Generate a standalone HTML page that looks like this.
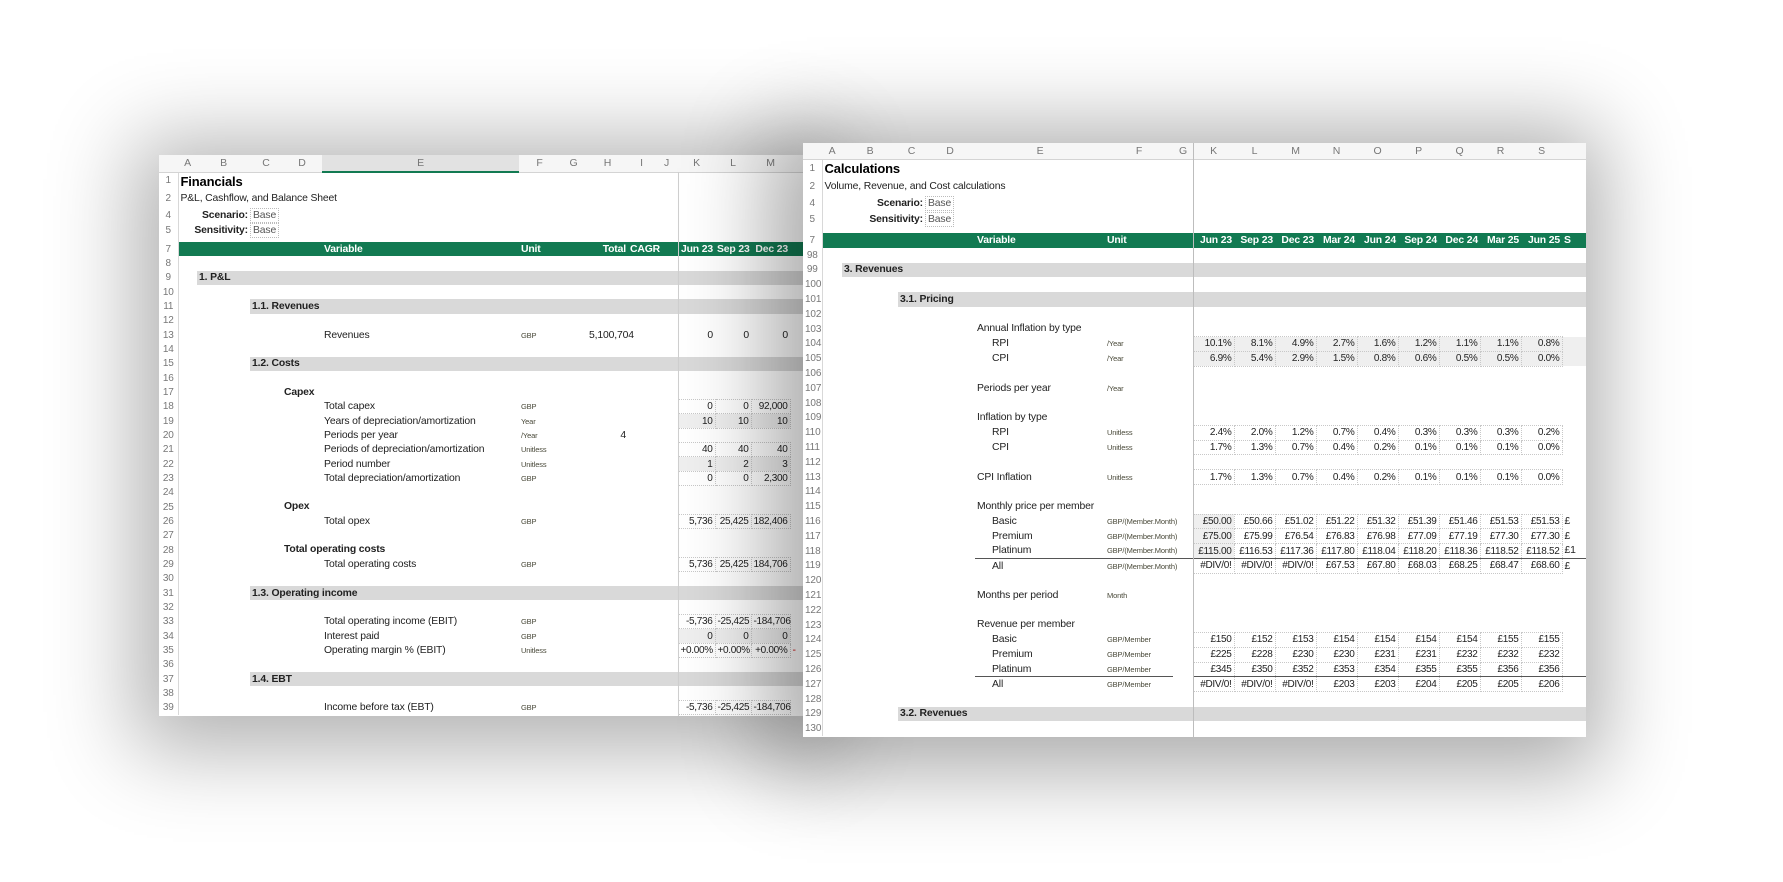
<!DOCTYPE html>
<html><head><meta charset="utf-8"><style>
*{margin:0;padding:0;box-sizing:border-box}
body{width:1783px;height:882px;background:#fff;position:relative;overflow:hidden;font-family:"Liberation Sans",sans-serif;font-size:10.4px;color:#222;letter-spacing:-0.15px}
.sheet{position:absolute;background:#fff;overflow:hidden}
table{border-collapse:collapse;table-layout:fixed;position:absolute;left:0}
td,th{white-space:nowrap;overflow:visible;padding:0 2px;font-weight:normal;vertical-align:middle}
th{color:#777;text-align:center;border-right:1px solid #d8d8d8;font-size:10px}
.ch td{color:#777;text-align:center;background:#f6f6f6;border-bottom:1px solid #d4d4d4;font-size:10.5px}
.g td{background:#127a52;color:#fff;font-weight:bold}
.bar{background:#d9d9d9;font-weight:bold}
.v{text-align:right;border:1px dotted #c8c8c8;font-size:10px;letter-spacing:-0.3px}
.in{background:#efefef}
.u{font-size:7.5px;color:#4a4a3a}
.b{font-weight:bold}
.r{text-align:right}
.box{border:1px dotted #bbb;color:#555;display:inline-block;padding:0 2px;line-height:13px}
.ln{border-bottom:1px solid #555}
.div{position:absolute;top:0;bottom:0;width:1px;background:#cfcfcf}
</style></head><body>

<div class="sheet" style="left:159px;top:155px;width:646px;height:561px;box-shadow:0 10px 80px 25px rgba(0,0,0,0.3)">
<table style="top:0;width:646px">
<colgroup><col style="width:19px"><col style="width:19px"><col style="width:53px"><col style="width:32px"><col style="width:40px"><col style="width:197px"><col style="width:41px"><col style="width:27px"><col style="width:41px"><col style="width:27px"><col style="width:23px"><col style="width:37px"><col style="width:36px"><col style="width:39px"><col style="width:15px"></colgroup>
<tr class="ch" style="height:17px"><td></td><td>A</td><td>B</td><td>C</td><td>D</td><td style="background:#e2e2e2;border-bottom:2px solid #127a52">E</td><td>F</td><td>G</td><td>H</td><td>I</td><td>J</td><td>K</td><td>L</td><td>M</td><td></td></tr>
<tr style="height:17px"><th>1</th><td colspan="14" class="b" style="font-size:13px;color:#000">Financials</td></tr>
<tr style="height:18px"><th>2</th><td colspan="14">P&amp;L, Cashflow, and Balance Sheet</td></tr>
<tr style="height:16px"><th>4</th><td colspan="2" class="b r">Scenario:</td><td colspan="12" style="padding:0"><span class="box">Base</span></td></tr>
<tr style="height:15px"><th>5</th><td colspan="2" class="b r">Sensitivity:</td><td colspan="12" style="padding:0"><span class="box">Base</span></td></tr>
<tr style="height:4px"><th></th><td colspan="14"></td></tr>
<tr class="g" style="height:14.33px"><th style="color:#777;background:#fff">7</th><td colspan="4"></td><td>Variable</td><td>Unit</td><td></td><td class="r">Total</td><td colspan="2">CAGR</td><td class="r">Jun 23</td><td class="r">Sep 23</td><td class="r">Dec 23</td><td></td></tr>
<tr style="height:14.33px"><th>8</th><td colspan="14"></td></tr>
<tr style="height:14.33px"><th>9</th><td></td><td colspan="13" class="bar">1. P&amp;L</td></tr>
<tr style="height:14.33px"><th>10</th><td colspan="14"></td></tr>
<tr style="height:14.33px"><th>11</th><td colspan="2"></td><td colspan="12" class="bar">1.1. Revenues</td></tr>
<tr style="height:14.33px"><th>12</th><td colspan="14"></td></tr>
<tr style="height:14.33px"><th>13</th><td colspan="4"></td><td>Revenues</td><td class="u">GBP</td><td></td><td class="r">5,100,704</td><td colspan="2"></td><td class="r">0</td><td class="r">0</td><td class="r">0</td><td></td></tr>
<tr style="height:14.33px"><th>14</th><td colspan="14"></td></tr>
<tr style="height:14.33px"><th>15</th><td colspan="2"></td><td colspan="12" class="bar">1.2. Costs</td></tr>
<tr style="height:14.33px"><th>16</th><td colspan="14"></td></tr>
<tr style="height:14.33px"><th>17</th><td colspan="3"></td><td colspan="11" class="b">Capex</td></tr>
<tr style="height:14.33px"><th>18</th><td colspan="4"></td><td>Total capex</td><td class="u">GBP</td><td colspan="4"></td><td class="v">0</td><td class="v">0</td><td class="v">92,000</td><td></td></tr>
<tr style="height:14.33px"><th>19</th><td colspan="4"></td><td>Years of depreciation/amortization</td><td class="u">Year</td><td colspan="4"></td><td class="v in">10</td><td class="v in">10</td><td class="v in">10</td><td></td></tr>
<tr style="height:14.33px"><th>20</th><td colspan="4"></td><td>Periods per year</td><td class="u">/Year</td><td></td><td class="r">4</td><td colspan="6"></td></tr>
<tr style="height:14.33px"><th>21</th><td colspan="4"></td><td>Periods of depreciation/amortization</td><td class="u">Unitless</td><td colspan="4"></td><td class="v">40</td><td class="v">40</td><td class="v">40</td><td></td></tr>
<tr style="height:14.33px"><th>22</th><td colspan="4"></td><td>Period number</td><td class="u">Unitless</td><td colspan="4"></td><td class="v in">1</td><td class="v in">2</td><td class="v in">3</td><td></td></tr>
<tr style="height:14.33px"><th>23</th><td colspan="4"></td><td>Total depreciation/amortization</td><td class="u">GBP</td><td colspan="4"></td><td class="v">0</td><td class="v">0</td><td class="v">2,300</td><td></td></tr>
<tr style="height:14.33px"><th>24</th><td colspan="14"></td></tr>
<tr style="height:14.33px"><th>25</th><td colspan="3"></td><td colspan="11" class="b">Opex</td></tr>
<tr style="height:14.33px"><th>26</th><td colspan="4"></td><td>Total opex</td><td class="u">GBP</td><td colspan="4"></td><td class="v">5,736</td><td class="v">25,425</td><td class="v">182,406</td><td></td></tr>
<tr style="height:14.33px"><th>27</th><td colspan="14"></td></tr>
<tr style="height:14.33px"><th>28</th><td colspan="3"></td><td colspan="11" class="b">Total operating costs</td></tr>
<tr style="height:14.33px"><th>29</th><td colspan="4"></td><td>Total operating costs</td><td class="u">GBP</td><td colspan="4"></td><td class="v">5,736</td><td class="v">25,425</td><td class="v">184,706</td><td></td></tr>
<tr style="height:14.33px"><th>30</th><td colspan="14"></td></tr>
<tr style="height:14.33px"><th>31</th><td colspan="2"></td><td colspan="12" class="bar">1.3. Operating income</td></tr>
<tr style="height:14.33px"><th>32</th><td colspan="14"></td></tr>
<tr style="height:14.33px"><th>33</th><td colspan="4"></td><td>Total operating income (EBIT)</td><td class="u">GBP</td><td colspan="4"></td><td class="v">-5,736</td><td class="v">-25,425</td><td class="v">-184,706</td><td></td></tr>
<tr style="height:14.33px"><th>34</th><td colspan="4"></td><td>Interest paid</td><td class="u">GBP</td><td colspan="4"></td><td class="v in">0</td><td class="v in">0</td><td class="v in">0</td><td></td></tr>
<tr style="height:14.33px"><th>35</th><td colspan="4"></td><td>Operating margin % (EBIT)</td><td class="u">Unitless</td><td colspan="4"></td><td class="v">+0.00%</td><td class="v">+0.00%</td><td class="v">+0.00%</td><td style="color:#c00">-</td></tr>
<tr style="height:14.33px"><th>36</th><td colspan="14"></td></tr>
<tr style="height:14.33px"><th>37</th><td colspan="2"></td><td colspan="12" class="bar">1.4. EBT</td></tr>
<tr style="height:14.33px"><th>38</th><td colspan="14"></td></tr>
<tr style="height:14.33px"><th>39</th><td colspan="4"></td><td>Income before tax (EBT)</td><td class="u">GBP</td><td colspan="4"></td><td class="v">-5,736</td><td class="v">-25,425</td><td class="v">-184,706</td><td></td></tr>
</table>
<div class="div" style="left:519px;top:17px"></div>
</div>

<div class="sheet" style="left:803px;top:143px;width:783px;height:594px;box-shadow:-10px 10px 80px 25px rgba(0,0,0,0.33)">
<table style="top:0;width:783px">
<colgroup><col style="width:19px"><col style="width:20px"><col style="width:56px"><col style="width:27px"><col style="width:50px"><col style="width:130px"><col style="width:68px"><col style="width:20px"><col style="width:41px"><col style="width:41px"><col style="width:41px"><col style="width:41px"><col style="width:41px"><col style="width:41px"><col style="width:41px"><col style="width:41px"><col style="width:41px"><col style="width:24px"></colgroup>
<tr class="ch" style="height:16px"><td></td><td>A</td><td>B</td><td>C</td><td>D</td><td>E</td><td>F</td><td>G</td><td>K</td><td>L</td><td>M</td><td>N</td><td>O</td><td>P</td><td>Q</td><td>R</td><td>S</td><td></td></tr>
<tr style="height:18px"><th>1</th><td colspan="17" class="b" style="font-size:13px;color:#000">Calculations</td></tr>
<tr style="height:18px"><th>2</th><td colspan="17">Volume, Revenue, and Cost calculations</td></tr>
<tr style="height:16px"><th>4</th><td colspan="3" class="b r">Scenario:</td><td colspan="14" style="padding:0"><span class="box">Base</span></td></tr>
<tr style="height:16px"><th>5</th><td colspan="3" class="b r">Sensitivity:</td><td colspan="14" style="padding:0"><span class="box">Base</span></td></tr>
<tr style="height:6px"><th></th><td colspan="17"></td></tr>
<tr class="g" style="height:14.8px"><th style="color:#777;background:#fff">7</th><td colspan="4"></td><td>Variable</td><td>Unit</td><td></td><td class="r">Jun 23</td><td class="r">Sep 23</td><td class="r">Dec 23</td><td class="r">Mar 24</td><td class="r">Jun 24</td><td class="r">Sep 24</td><td class="r">Dec 24</td><td class="r">Mar 25</td><td class="r">Jun 25</td><td>S</td></tr>
<tr style="height:14.8px"><th>98</th><td colspan="17"></td></tr>
<tr style="height:14.8px"><th>99</th><td></td><td colspan="16" class="bar">3. Revenues</td></tr>
<tr style="height:14.8px"><th>100</th><td colspan="17"></td></tr>
<tr style="height:14.8px"><th>101</th><td colspan="2"></td><td colspan="15" class="bar">3.1. Pricing</td></tr>
<tr style="height:14.8px"><th>102</th><td colspan="17"></td></tr>
<tr style="height:14.8px"><th>103</th><td colspan="4"></td><td colspan="13">Annual Inflation by type</td></tr>
<tr style="height:14.8px"><th>104</th><td colspan="4"></td><td style="padding-left:17px">RPI</td><td class="u">/Year</td><td></td><td class="v in">10.1%</td><td class="v in">8.1%</td><td class="v in">4.9%</td><td class="v in">2.7%</td><td class="v in">1.6%</td><td class="v in">1.2%</td><td class="v in">1.1%</td><td class="v in">1.1%</td><td class="v in">0.8%</td><td class="in"></td></tr>
<tr style="height:14.8px"><th>105</th><td colspan="4"></td><td style="padding-left:17px">CPI</td><td class="u">/Year</td><td></td><td class="v in">6.9%</td><td class="v in">5.4%</td><td class="v in">2.9%</td><td class="v in">1.5%</td><td class="v in">0.8%</td><td class="v in">0.6%</td><td class="v in">0.5%</td><td class="v in">0.5%</td><td class="v in">0.0%</td><td class="in"></td></tr>
<tr style="height:14.8px"><th>106</th><td colspan="17"></td></tr>
<tr style="height:14.8px"><th>107</th><td colspan="4"></td><td>Periods per year</td><td class="u">/Year</td><td colspan="11"></td></tr>
<tr style="height:14.8px"><th>108</th><td colspan="17"></td></tr>
<tr style="height:14.8px"><th>109</th><td colspan="4"></td><td colspan="13">Inflation by type</td></tr>
<tr style="height:14.8px"><th>110</th><td colspan="4"></td><td style="padding-left:17px">RPI</td><td class="u">Unitless</td><td></td><td class="v">2.4%</td><td class="v">2.0%</td><td class="v">1.2%</td><td class="v">0.7%</td><td class="v">0.4%</td><td class="v">0.3%</td><td class="v">0.3%</td><td class="v">0.3%</td><td class="v">0.2%</td><td></td></tr>
<tr style="height:14.8px"><th>111</th><td colspan="4"></td><td style="padding-left:17px">CPI</td><td class="u">Unitless</td><td></td><td class="v">1.7%</td><td class="v">1.3%</td><td class="v">0.7%</td><td class="v">0.4%</td><td class="v">0.2%</td><td class="v">0.1%</td><td class="v">0.1%</td><td class="v">0.1%</td><td class="v">0.0%</td><td></td></tr>
<tr style="height:14.8px"><th>112</th><td colspan="17"></td></tr>
<tr style="height:14.8px"><th>113</th><td colspan="4"></td><td>CPI Inflation</td><td class="u">Unitless</td><td></td><td class="v">1.7%</td><td class="v">1.3%</td><td class="v">0.7%</td><td class="v">0.4%</td><td class="v">0.2%</td><td class="v">0.1%</td><td class="v">0.1%</td><td class="v">0.1%</td><td class="v">0.0%</td><td></td></tr>
<tr style="height:14.8px"><th>114</th><td colspan="17"></td></tr>
<tr style="height:14.8px"><th>115</th><td colspan="4"></td><td colspan="13">Monthly price per member</td></tr>
<tr style="height:14.8px"><th>116</th><td colspan="4"></td><td style="padding-left:17px">Basic</td><td class="u" colspan="2">GBP/(Member.Month)</td><td class="v in">£50.00</td><td class="v">£50.66</td><td class="v">£51.02</td><td class="v">£51.22</td><td class="v">£51.32</td><td class="v">£51.39</td><td class="v">£51.46</td><td class="v">£51.53</td><td class="v">£51.53</td><td>£</td></tr>
<tr style="height:14.8px"><th>117</th><td colspan="4"></td><td style="padding-left:17px">Premium</td><td class="u" colspan="2">GBP/(Member.Month)</td><td class="v in">£75.00</td><td class="v">£75.99</td><td class="v">£76.54</td><td class="v">£76.83</td><td class="v">£76.98</td><td class="v">£77.09</td><td class="v">£77.19</td><td class="v">£77.30</td><td class="v">£77.30</td><td>£</td></tr>
<tr style="height:14.8px"><th>118</th><td colspan="4"></td><td class="ln" style="padding-left:17px">Platinum</td><td class="u ln" colspan="2">GBP/(Member.Month)</td><td class="v in ln">£115.00</td><td class="v ln">£116.53</td><td class="v ln">£117.36</td><td class="v ln">£117.80</td><td class="v ln">£118.04</td><td class="v ln">£118.20</td><td class="v ln">£118.36</td><td class="v ln">£118.52</td><td class="v ln">£118.52</td><td class="ln">£1</td></tr>
<tr style="height:14.8px"><th>119</th><td colspan="4"></td><td style="padding-left:17px">All</td><td class="u" colspan="2">GBP/(Member.Month)</td><td class="v">#DIV/0!</td><td class="v">#DIV/0!</td><td class="v">#DIV/0!</td><td class="v">£67.53</td><td class="v">£67.80</td><td class="v">£68.03</td><td class="v">£68.25</td><td class="v">£68.47</td><td class="v">£68.60</td><td>£</td></tr>
<tr style="height:14.8px"><th>120</th><td colspan="17"></td></tr>
<tr style="height:14.8px"><th>121</th><td colspan="4"></td><td>Months per period</td><td class="u">Month</td><td colspan="11"></td></tr>
<tr style="height:14.8px"><th>122</th><td colspan="17"></td></tr>
<tr style="height:14.8px"><th>123</th><td colspan="4"></td><td colspan="13">Revenue per member</td></tr>
<tr style="height:14.8px"><th>124</th><td colspan="4"></td><td style="padding-left:17px">Basic</td><td class="u">GBP/Member</td><td></td><td class="v">£150</td><td class="v">£152</td><td class="v">£153</td><td class="v">£154</td><td class="v">£154</td><td class="v">£154</td><td class="v">£154</td><td class="v">£155</td><td class="v">£155</td><td></td></tr>
<tr style="height:14.8px"><th>125</th><td colspan="4"></td><td style="padding-left:17px">Premium</td><td class="u">GBP/Member</td><td></td><td class="v">£225</td><td class="v">£228</td><td class="v">£230</td><td class="v">£230</td><td class="v">£231</td><td class="v">£231</td><td class="v">£232</td><td class="v">£232</td><td class="v">£232</td><td></td></tr>
<tr style="height:14.8px"><th>126</th><td colspan="4"></td><td class="ln" style="padding-left:17px">Platinum</td><td class="u ln">GBP/Member</td><td></td><td class="v ln">£345</td><td class="v ln">£350</td><td class="v ln">£352</td><td class="v ln">£353</td><td class="v ln">£354</td><td class="v ln">£355</td><td class="v ln">£355</td><td class="v ln">£356</td><td class="v ln">£356</td><td class="ln"></td></tr>
<tr style="height:14.8px"><th>127</th><td colspan="4"></td><td style="padding-left:17px">All</td><td class="u">GBP/Member</td><td></td><td class="v">#DIV/0!</td><td class="v">#DIV/0!</td><td class="v">#DIV/0!</td><td class="v">£203</td><td class="v">£203</td><td class="v">£204</td><td class="v">£205</td><td class="v">£205</td><td class="v">£206</td><td></td></tr>
<tr style="height:14.8px"><th>128</th><td colspan="17"></td></tr>
<tr style="height:14.8px"><th>129</th><td colspan="2"></td><td colspan="15" class="bar">3.2. Revenues</td></tr>
<tr style="height:14.8px"><th>130</th><td colspan="17"></td></tr>
</table>
<div class="div" style="left:390px;top:0;background:#bdbdbd"></div>
</div>
</body></html>
